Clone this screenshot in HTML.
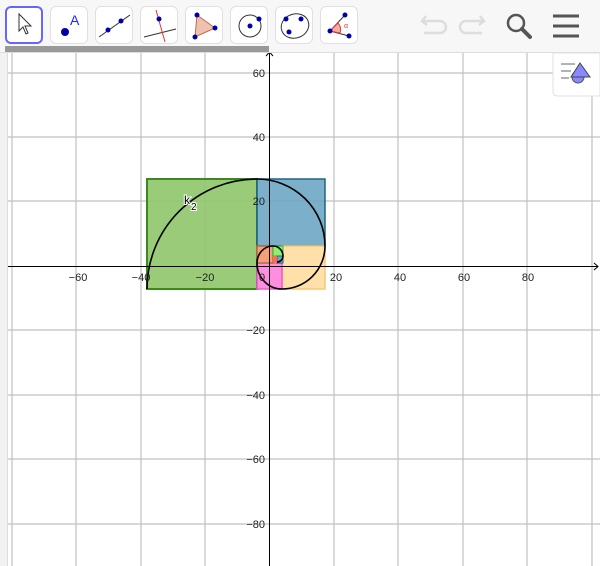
<!DOCTYPE html>
<html><head><meta charset="utf-8"><style>
html,body{margin:0;padding:0;width:600px;height:566px;overflow:hidden;background:#fff;font-family:"Liberation Sans",sans-serif}
.tb{position:absolute;left:0;top:0;width:600px;height:52px;background:#f7f7f7;border-bottom:1px solid #ddd}
.btn{position:absolute;top:6px;width:38px;height:38px;border:1px solid #e0e0e0;border-radius:6px;background:#fff;box-sizing:border-box}
.sel{border:2px solid #6666ff}
</style></head><body>
<svg width="600" height="566" style="position:absolute;left:0;top:0" font-family="Liberation Sans, sans-serif">
<g stroke="#c0c0c0" stroke-width="1.2">
<line x1="12" y1="52" x2="12" y2="566"/><line x1="76" y1="52" x2="76" y2="566"/><line x1="141" y1="52" x2="141" y2="566"/><line x1="205" y1="52" x2="205" y2="566"/><line x1="334" y1="52" x2="334" y2="566"/><line x1="398" y1="52" x2="398" y2="566"/><line x1="463" y1="52" x2="463" y2="566"/><line x1="527" y1="52" x2="527" y2="566"/><line x1="592" y1="52" x2="592" y2="566"/>
<line x1="8" y1="73" x2="600" y2="73"/><line x1="8" y1="137" x2="600" y2="137"/><line x1="8" y1="201" x2="600" y2="201"/><line x1="8" y1="330" x2="600" y2="330"/><line x1="8" y1="395" x2="600" y2="395"/><line x1="8" y1="459" x2="600" y2="459"/><line x1="8" y1="524" x2="600" y2="524"/>
</g>
<rect x="0" y="52" width="7" height="514" fill="#f2f2f2"/><line x1="7.5" y1="52" x2="7.5" y2="566" stroke="#ddd"/>
<rect x="147" y="179" width="110" height="110" fill="#8fc56a" fill-opacity="0.9" stroke="#3c8a1e" stroke-width="2"/>
<rect x="257" y="179" width="68" height="67" fill="#6ea7c4" fill-opacity="0.9" stroke="#1f6585" stroke-width="1.5"/>
<rect x="282" y="246" width="43" height="43" fill="#ffe0a8" stroke="#f5c77a" stroke-width="1.5"/>
<rect x="257" y="263" width="25" height="26" fill="#ff8de0" stroke="#e85bc8" stroke-width="1.5"/>
<rect x="257" y="246" width="16" height="17" fill="#f5a07a" stroke="#b86a4a" stroke-width="1.5"/>
<rect x="273" y="246" width="10" height="10" fill="#90ee70" stroke="#40b040" stroke-width="1"/>
<rect x="277" y="256" width="6" height="7" fill="#6ea7c4" stroke="#1f6585" stroke-width="1"/>
<rect x="273" y="256" width="4" height="7" fill="#ff7040"/>
<line x1="8" y1="266.5" x2="598" y2="266.5" stroke="#000"/>
<line x1="269.5" y1="52" x2="269.5" y2="566" stroke="#000"/>
<path d="M594 263 L598 266.5 L594 270" fill="none" stroke="#000"/>
<path d="M266 56 L269.5 52 L273 56" fill="none" stroke="#000"/>
<path d="M147 289 A110 110 0 0 1 257 179 A68 67 0 0 1 325 246 A43 43 0 0 1 282 289 A25 26 0 0 1 257 263 A16 17 0 0 1 273 246 A10 10 0 0 1 283 256 A6 6 0 0 1 277 262" fill="none" stroke="#000" stroke-width="1.6"/>
<g font-size="11" fill="#222">
<text x="78" y="281" text-anchor="middle">−60</text><text x="141" y="281" text-anchor="middle">−40</text><text x="205" y="281" text-anchor="middle">−20</text><text x="262" y="281" text-anchor="middle">0</text>
<text x="336" y="281" text-anchor="middle">20</text><text x="400" y="281" text-anchor="middle">40</text><text x="464" y="281" text-anchor="middle">60</text><text x="528" y="281" text-anchor="middle">80</text>
<g text-anchor="end"><text x="265" y="77">60</text><text x="265" y="141">40</text><text x="265" y="205">20</text><text x="265" y="334">−20</text><text x="265" y="399">−40</text><text x="265" y="463">−60</text><text x="265" y="528">−80</text></g>
</g>
<text x="184" y="204" font-size="12" fill="#000" stroke="#fff" stroke-width="2" paint-order="stroke">k</text>
<text x="191" y="210" font-size="10" fill="#000" stroke="#fff" stroke-width="2" paint-order="stroke">2</text>
</svg>
<div class="tb"></div>
<div style="position:absolute;left:5px;top:46px;width:264px;height:6px;background:#999"></div>
<div class="btn sel" style="left:5px"></div>
<div class="btn" style="left:50px"></div><div class="btn" style="left:95px"></div><div class="btn" style="left:140px"></div><div class="btn" style="left:185px"></div><div class="btn" style="left:230px"></div><div class="btn" style="left:275px"></div><div class="btn" style="left:320px"></div>
<svg width="600" height="100" style="position:absolute;left:0;top:0">
<path d="M19 14 L19 31 L23 27 L26 34 L28 33 L25 26 L31 26 Z" fill="#fff" stroke="#333" stroke-width="1"/>
<circle cx="65" cy="32" r="4" fill="#0000aa"/><text x="70" y="25" font-size="14" fill="#2222ff" font-family="Liberation Sans">A</text>
<line x1="99" y1="37" x2="130" y2="15" stroke="#333"/><circle cx="108" cy="30" r="2.5" fill="#0000aa"/><circle cx="121" cy="21" r="2.5" fill="#0000aa"/>
<line x1="144" y1="37" x2="176" y2="29" stroke="#333"/><line x1="156" y1="10" x2="165" y2="42" stroke="#e33"/><circle cx="159" cy="19" r="2.5" fill="#0000aa"/>
<path d="M197 15 L215 28 L195 37 Z" fill="#f0c0b0" stroke="#b87040"/><circle cx="197" cy="15" r="2.5" fill="#0000aa"/><circle cx="215" cy="28" r="2.5" fill="#0000aa"/><circle cx="195" cy="37" r="2.5" fill="#0000aa"/>
<circle cx="250" cy="26" r="11" fill="none" stroke="#333"/><circle cx="250" cy="26" r="2.5" fill="#0000aa"/><circle cx="259" cy="19" r="2.5" fill="#0000aa"/>
<ellipse cx="295" cy="26" rx="14" ry="12" fill="none" stroke="#333" transform="rotate(-20 295 26)"/><circle cx="286" cy="19" r="2.5" fill="#0000aa"/><circle cx="301" cy="19" r="2.5" fill="#0000aa"/><circle cx="289" cy="32" r="2.5" fill="#0000aa"/>
<path d="M330 31 L345 15 M330 31 L349 36" stroke="#333" fill="none"/><path d="M330 31 L338 23 A10 10 0 0 1 340 33 Z" fill="#f0b0a0" stroke="#e33"/><circle cx="345" cy="15" r="2.5" fill="#0000aa"/><circle cx="330" cy="31" r="2.5" fill="#0000aa"/><circle cx="349" cy="36" r="2.5" fill="#0000aa"/><text x="344" y="28" font-size="7" fill="#e33">α</text>
<path d="M426 16 L422 21 L427 25 M423 21 L440 21 A6 6 0 0 1 440 33 L424 33" fill="none" stroke="#ddd" stroke-width="2.5"/>
<path d="M480 16 L484 21 L479 25 M483 21 L466 21 A6 6 0 0 0 466 33 L482 33" fill="none" stroke="#ddd" stroke-width="2.5"/>
<circle cx="516" cy="23" r="8" fill="none" stroke="#555" stroke-width="2.5"/><line x1="522" y1="29" x2="530" y2="37" stroke="#555" stroke-width="4" stroke-linecap="round"/>
<g stroke="#555" stroke-width="3"><line x1="553" y1="16" x2="579" y2="16"/><line x1="553" y1="26" x2="579" y2="26"/><line x1="553" y1="36" x2="579" y2="36"/></g>
<path d="M553 53 L600 53 L600 96 L558 96 Q553 96 553 91 Z" fill="#fff" stroke="#e0e0e0"/>
<g stroke="#999" stroke-width="1.5"><line x1="561" y1="64" x2="575" y2="64"/><line x1="561" y1="71" x2="571" y2="71"/><line x1="561" y1="78" x2="569" y2="78"/></g>
<circle cx="578" cy="77" r="6" fill="#8888ff" stroke="#555"/><path d="M580 63 L590 77 L571 77 Z" fill="#8888ff" stroke="#444"/>
</svg>
</body></html>
